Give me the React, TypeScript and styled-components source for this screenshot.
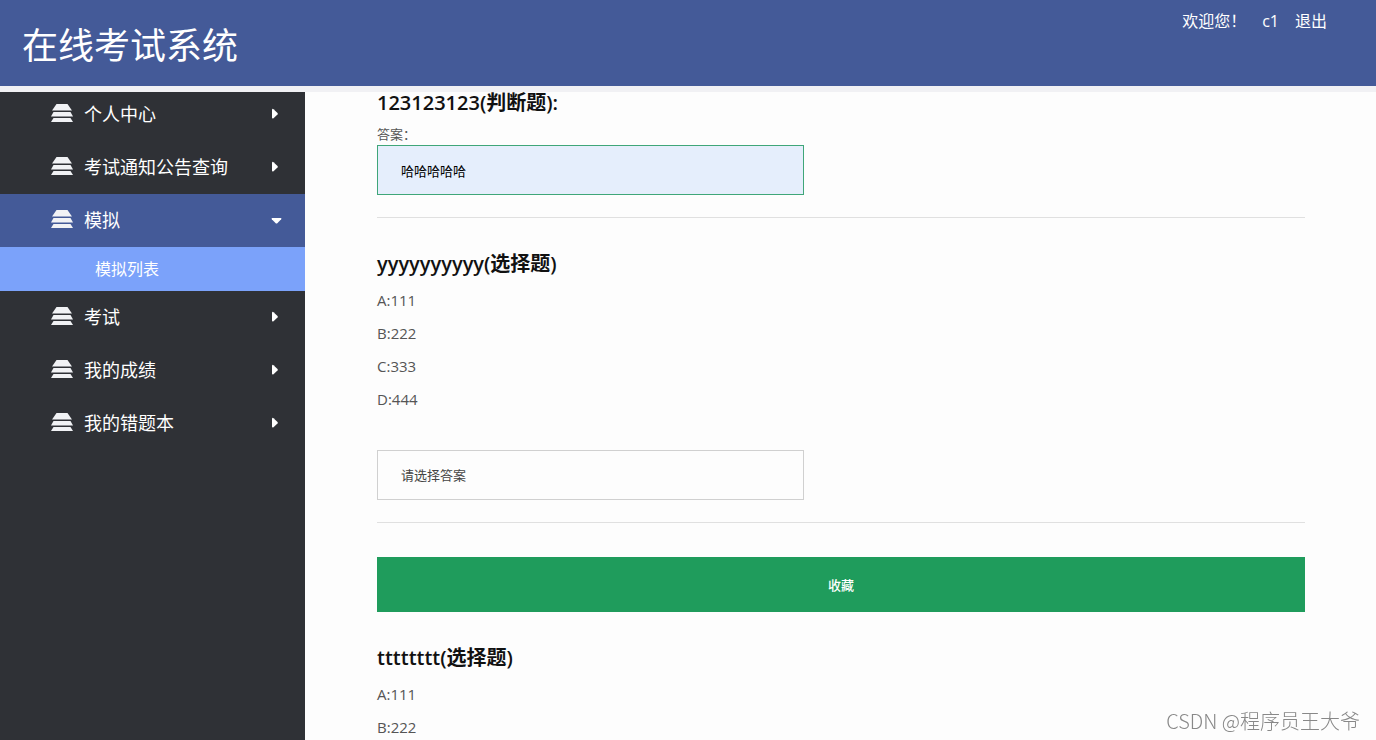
import React from "react";
import styled, { createGlobalStyle } from "styled-components";

const GlobalStyle = createGlobalStyle`
  * { box-sizing: border-box; }
  body {
    margin: 0;
    background: #fdfdfd;
    color: #555;
    font-family: "Open Sans", "Noto Sans CJK SC", sans-serif;
    font-size: 15px;
  }
`;

const Page = styled.div`
  display: flex;
  flex-direction: column;
  height: 100vh;
`;

const Header = styled.header`
  display: flex;
  flex: none;
  justify-content: space-between;
  align-items: flex-start;
  padding: 0 49px 0 22px;
  background: #445a98;
  border-bottom: 6px solid #f1f1f4;
`;

const Brand = styled.h1`
  margin: 0;
  padding: 20px 0 14px;
  color: #fff;
  font-size: 36px;
  font-weight: 400;
  line-height: 52px;
`;

const UserBar = styled.nav`
  display: flex;
  gap: 16px;
  padding-top: 9px;
  color: #fff;
  font-size: 16px;
  line-height: 24px;
`;

const UserLink = styled.a`
  color: inherit;
  text-decoration: none;
`;

const Body = styled.div`
  display: flex;
  flex: 1;
  min-height: 0;
`;

const Sidebar = styled.aside`
  flex: none;
  width: 305px;
  overflow: hidden;
  background: #2f3136;
`;

const Menu = styled.ul`
  margin: -4px 0 0;
  padding: 0;
  list-style: none;
`;

const MenuButton = styled.button<{ $open?: boolean }>`
  display: flex;
  align-items: center;
  gap: 11px;
  width: 100%;
  height: 53px;
  padding: 0 22px 1px 51px;
  border: 0;
  background: ${(p) => (p.$open ? "#445a98" : "transparent")};
  color: #fff;
  font: inherit;
  font-size: 18px;
  line-height: 26px;
  text-align: left;
  cursor: pointer;
`;

const MenuLabel = styled.span`
  flex: 1;
`;

const SubLink = styled.a`
  display: block;
  padding-left: 95px;
  background: #7ba2fa;
  color: #fff;
  font-size: 16px;
  line-height: 44px;
  text-decoration: none;
`;

const Main = styled.main`
  flex: 1;
  min-width: 0;
  overflow: auto;
  scrollbar-width: none;
  padding: 0 71px 0 72px;
`;

const Paper = styled.form`
  margin-top: -4px;
`;

const QuestionTitle = styled.h2`
  margin: 0 0 5px;
  color: #111;
  font-size: 20px;
  font-weight: 600;
  line-height: 30px;
`;

const Option = styled.p`
  margin: 0;
  line-height: 33px;
`;

const FieldLabel = styled.label`
  display: block;
  font-size: 13px;
  line-height: 22px;
`;

const TextField = styled.input`
  display: block;
  width: 46%;
  height: 50px;
  padding: 0 23px;
  border: 1px solid #3fa679;
  border-radius: 0;
  outline: 0;
  background: #e5eefc;
  color: #000;
  font: inherit;
  font-size: 13px;
`;

const ChoiceField = styled.select`
  display: block;
  appearance: none;
  width: 46%;
  height: 50px;
  margin-top: 34px;
  padding: 0 23px;
  border: 1px solid #d0d0d0;
  border-radius: 0;
  background: #fdfdfd;
  color: #444;
  font: inherit;
  font-size: 13px;
`;

const Divider = styled.hr`
  margin: 22px 0 31px;
  border: 0;
  border-top: 1px solid #e0e0e0;
`;

const FavoriteButton = styled.button`
  display: block;
  width: 100%;
  height: 55px;
  margin: 34px 0 31px;
  border: 0;
  background: #1f9c5c;
  color: #fff;
  font: inherit;
  font-size: 13px;
  font-weight: 500;
  cursor: pointer;
`;

const Watermark = styled.div`
  position: fixed;
  right: 16px;
  bottom: 5px;
  color: #888;
  font-family: "Noto Sans CJK SC", sans-serif;
  font-size: 20px;
  font-weight: 300;
  line-height: 28px;
  pointer-events: none;
`;

const StackIcon = () => (
  <svg width="22" height="20" viewBox="0 0 22 20" fill="#f1f2f5" aria-hidden="true">
    <path d="M5.500 0H16.500L21 6.500H1Z" />
    <path d="M2.500 8H19.500L22 12.500H0Z" />
    <path d="M2.500 14H19.500L22 18H0Z" />
  </svg>
);

const Caret = ({ open }: { open?: boolean }) => (
  <svg width="12" height="12" viewBox="0 0 12 12" fill="#fff" aria-hidden="true">
    {open ? (
      <path d="M1.2 4H9.8Q11 4.200 10.200 5.200L6.300 9.200Q5.500 10 4.700 9.200L.8 5.200Q0 4.200 1.200 4Z" />
    ) : (
      <path d="M1 1.500Q1.300 .3 2.500 1.200L6.500 5Q7.200 5.700 6.500 6.400L2.500 10.200Q1.300 11 1 9.800Z" />
    )}
  </svg>
);

type MenuEntry = { label: string; children?: string[] };

const menu: MenuEntry[] = [
  { label: "个人中心" },
  { label: "考试通知公告查询" },
  { label: "模拟", children: ["模拟列表"] },
  { label: "考试" },
  { label: "我的成绩" },
  { label: "我的错题本" },
];

const options = ["A:111", "B:222", "C:333", "D:444"];

const ChoiceQuestion = ({ title }: { title: string }) => (
  <section>
    <QuestionTitle>{title}</QuestionTitle>
    {options.map((option) => (
      <Option key={option}>{option}</Option>
    ))}
    <ChoiceField aria-label={title} defaultValue="">
      <option value="">请选择答案</option>
      {options.map((option) => (
        <option key={option} value={option[0]}>{option[0]}</option>
      ))}
    </ChoiceField>
    <Divider />
  </section>
);

export default function App() {
  return (
    <Page>
      <GlobalStyle />
      <Header>
        <Brand>在线考试系统</Brand>
        <UserBar>
          <span>欢迎您！</span>
          <UserLink href="#profile">c1</UserLink>
          <UserLink href="#logout">退出</UserLink>
        </UserBar>
      </Header>
      <Body>
        <Sidebar>
          <Menu>
            {menu.map(({ label, children }) => (
              <li key={label}>
                <MenuButton type="button" $open={!!children} aria-expanded={!!children}>
                  <StackIcon />
                  <MenuLabel>{label}</MenuLabel>
                  <Caret open={!!children} />
                </MenuButton>
                {children?.map((child) => (
                  <SubLink key={child} href="#list">{child}</SubLink>
                ))}
              </li>
            ))}
          </Menu>
        </Sidebar>
        <Main>
          <Paper>
            <section>
              <QuestionTitle>123123123(判断题):</QuestionTitle>
              <FieldLabel htmlFor="answer">答案：</FieldLabel>
              <TextField id="answer" type="text" defaultValue="哈哈哈哈哈" />
              <Divider />
            </section>
            <ChoiceQuestion title="yyyyyyyyyy(选择题)" />
            <FavoriteButton type="button">收藏</FavoriteButton>
            <ChoiceQuestion title="tttttttt(选择题)" />
          </Paper>
        </Main>
      </Body>
      <Watermark>CSDN @程序员王大爷</Watermark>
    </Page>
  );
}
